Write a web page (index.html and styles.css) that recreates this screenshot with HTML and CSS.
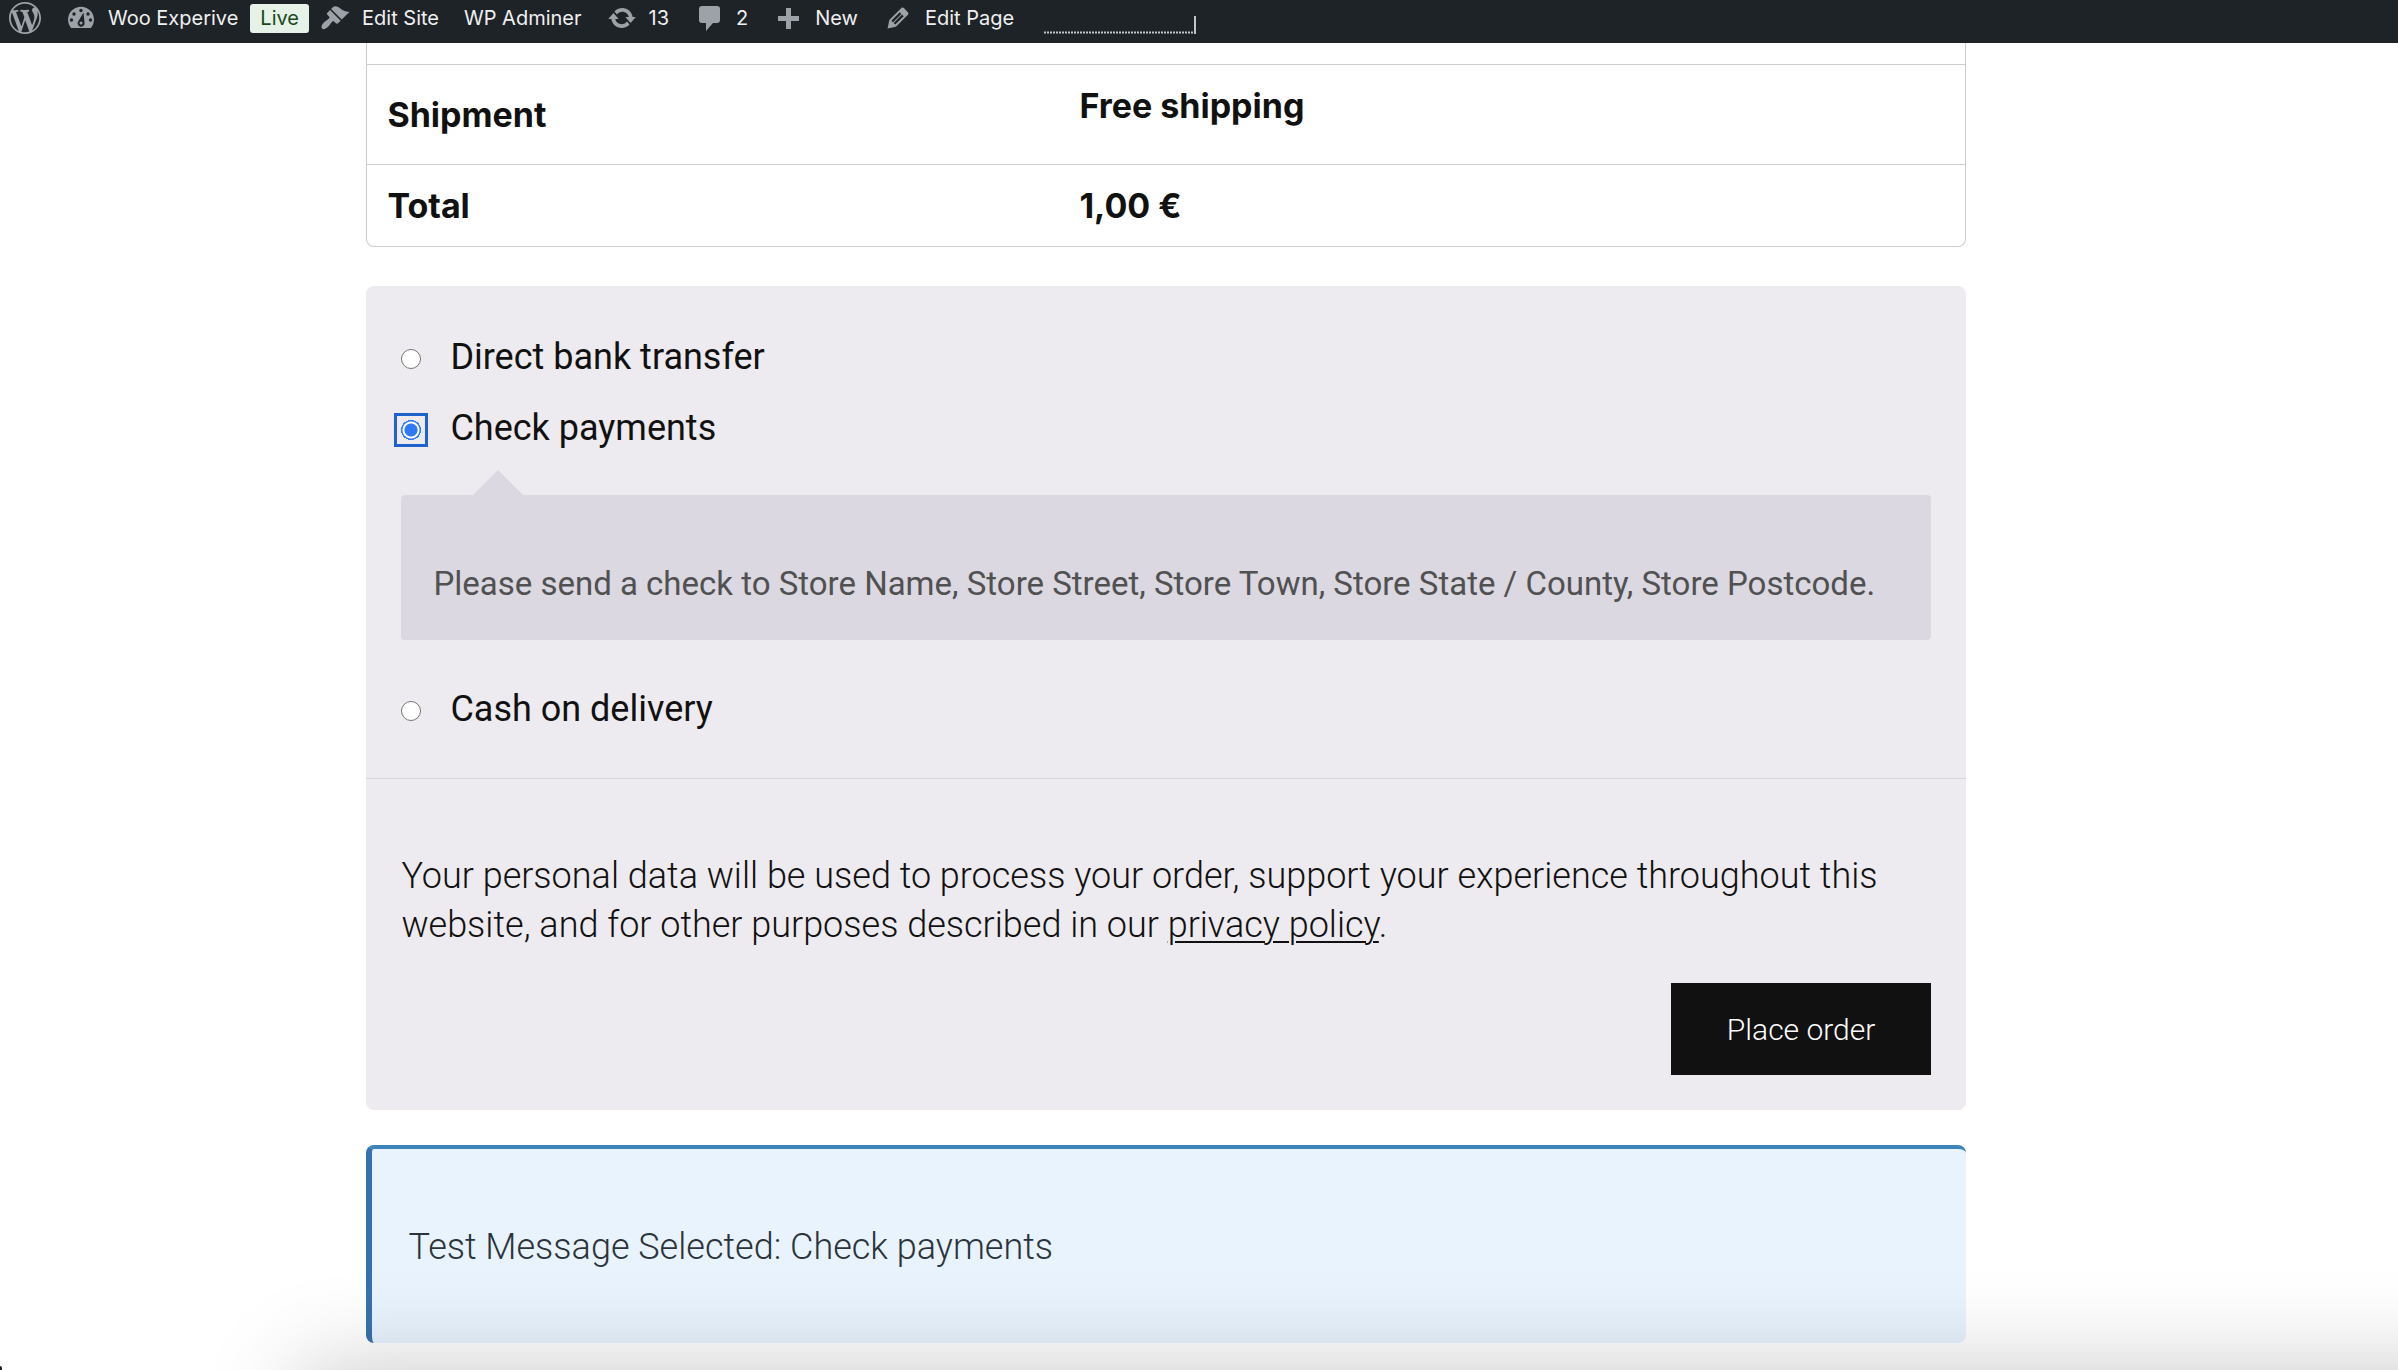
FILE: index.html
```
<!DOCTYPE html>
<html lang="en">
<head>
    <meta charset="UTF-8">
    <meta name="viewport" content="width=device-width, initial-scale=1.0">
    <title>Checkout</title>
    <link rel="stylesheet" href="styles.css">
</head>
<body>
    <nav class="adminbar">
        <a href="#" aria-label="About WordPress">
            <svg class="logo" viewBox="0 0 20 20"><path d="M20 10c0-5.51-4.49-10-10-10C4.48 0 0 4.49 0 10c0 5.52 4.48 10 10 10 5.51 0 10-4.48 10-10zM7.78 15.37L4.37 6.22c.55-.02 1.17-.08 1.17-.08.5-.06.44-1.13-.06-1.11 0 0-1.45.11-2.37.11-.18 0-.37 0-.58-.01C4.12 2.69 6.87 1.11 10 1.11c2.33 0 4.45.87 6.05 2.34-.68-.11-1.65.39-1.65 1.58 0 .74.45 1.36.9 2.1.35.61.55 1.36.55 2.46 0 1.49-1.4 5-1.4 5l-3.03-8.37c.54-.02.82-.17.82-.17.5-.05.44-1.25-.06-1.22 0 0-1.44.12-2.38.12-.87 0-2.33-.12-2.33-.12-.5-.03-.56 1.2-.06 1.22l.92.08 1.26 3.41zM17.41 10c.24-.64.74-1.87.43-4.25.7 1.29 1.05 2.71 1.05 4.25 0 3.29-1.73 6.24-4.4 7.78.97-2.59 1.94-5.2 2.92-7.78zM6.1 18.09C3.12 16.65 1.11 13.53 1.11 10c0-1.3.23-2.48.72-3.59C3.25 10.3 4.67 14.2 6.1 18.09zm4.03-6.63l2.58 6.98c-.86.29-1.76.45-2.71.45-.79 0-1.57-.11-2.29-.33.81-2.38 1.62-4.74 2.42-7.1z"/></svg>
        </a>
        <a href="#">
            <svg viewBox="0 0 30 30"><path d="M5 25a13 13 0 1 1 20 0z"/><g class="cut"><circle cx="5.500" cy="17" r="1.700"/><circle cx="8" cy="11" r="1.700"/><circle cx="15" cy="7.500" r="1.700"/><circle cx="22" cy="11" r="1.700"/><circle cx="24.500" cy="17" r="1.700"/><path d="M17.500 9.500l1 10a3.500 3.500 0 1 1-6 -1.500z"/></g><circle cx="15" cy="20" r="1.500"/></svg>
            Woo Experive
            <span class="badge">Live</span>
        </a>
        <a href="#" class="after-badge">
            <svg viewBox="0 0 20 20"><path d="M14.48 11.06L7.41 3.99l1.5-1.5c.5-.56 2.3-.47 3.51.32 1.21.8 1.43 1.28 2.91 2.1 1.18.64 2.45 1.26 4.45.85zm-.71.71L6.7 4.7 4.93 6.47c-.39.39-.39 1.02 0 1.41l1.06 1.06c.39.39.39 1.03 0 1.42-.6.6-1.43 1.11-2.21 1.69-.35.26-.7.53-1.01.84C1.43 14.23.4 16.08 1.4 17.07c.99 1 2.84-.03 4.18-1.36.31-.31.58-.66.85-1.02.57-.78 1.08-1.61 1.69-2.21.39-.39 1.02-.39 1.41 0l1.06 1.06c.39.39 1.02.39 1.41 0z"/></svg>
            Edit Site
        </a>
        <a href="#">WP Adminer</a>
        <a href="#">
            <svg viewBox="0 0 20 20"><path d="M10.2 3.28c3.53 0 6.43 2.61 6.92 6h2.08l-3.5 4-3.5-4h2.32c-.45-1.97-2.21-3.45-4.32-3.45-1.45 0-2.73.71-3.54 1.78L4.95 5.66C6.23 4.2 8.11 3.28 10.2 3.28zm-.4 13.44c-3.52 0-6.43-2.61-6.92-6H.8l3.5-4c1.17 1.33 2.33 2.67 3.5 4H5.48c.45 1.97 2.21 3.45 4.32 3.45 1.45 0 2.73-.71 3.54-1.78l1.71 1.95c-1.28 1.46-3.15 2.38-5.25 2.38z"/></svg>
            13
        </a>
        <a href="#">
            <svg viewBox="0 0 30 30"><path d="M8 3h15q3 0 3 3v11q0 3-3 3h-4l-7 8v-8H8q-3 0-3-3V6q0-3 3-3z"/></svg>
            2
        </a>
        <a href="#">
            <svg viewBox="0 0 30 30"><path d="M13 5h5v8h8v5h-8v8h-5v-8H5v-5h8z"/></svg>
            New
        </a>
        <a href="#">
            <svg viewBox="0 0 20 20"><path d="M13.89 3.39l2.71 2.72c.46.46.42 1.24.03 1.64l-8.01 8.02-5.56 1.16 1.16-5.58s7.6-7.63 7.99-8.03c.39-.39 1.22-.39 1.68.07zm-2.73 2.79l-5.59 5.61 1.11 1.11 5.54-5.65zm-2.97 8.23l5.58-5.6-1.07-1.08-5.59 5.6z"/></svg>
            Edit Page
        </a>
        <svg class="chart" viewBox="0 0 152 18"><path d="M0 16.500h150" stroke-width="2" stroke-dasharray="2 1"/><path d="M151 0v18" stroke-width="2"/></svg>
    </nav>

    <main class="checkout">
        <table class="totals">
            <tr class="cut-row"><td></td><td></td></tr>
            <tr class="shipment"><th scope="row">Shipment</th><td><p>Free shipping</p></td></tr>
            <tr><th scope="row">Total</th><td>1,00 €</td></tr>
        </table>

        <form class="payment">
            <div class="methods">
                <div class="method">
                    <input type="radio" id="bacs" name="payment_method">
                    <label for="bacs">Direct bank transfer</label>
                </div>
                <div class="method">
                    <input type="radio" id="cheque" name="payment_method" checked>
                    <label for="cheque">Check payments</label>
                </div>
                <div class="payment-box">
                    <p>Please send a check to Store Name, Store Street, Store Town, Store State / County, Store Postcode.</p>
                </div>
                <div class="method">
                    <input type="radio" id="cod" name="payment_method">
                    <label for="cod">Cash on delivery</label>
                </div>
            </div>
            <div class="place-order">
                <p>Your personal data will be used to process your order, support your experience throughout this website, and for other purposes described in our <a href="#">privacy policy</a>.</p>
                <button type="button">Place order</button>
            </div>
        </form>

        <div class="info">Test Message Selected: Check payments</div>
    </main>
    <div class="dock-shadow"></div>
    <div class="corner"></div>
</body>
</html>
```
FILE: styles.css
```
* {
    box-sizing: border-box;
}
body {
    margin: 0;
    height: 100vh;
    overflow: hidden;
    background: #fff;
    color: #111;
    font-family: Roboto, sans-serif;
    font-size: 36px;
    font-weight: 300;
    line-height: 49px;
}
p {
    margin: 0;
}

/* Admin bar */
.adminbar {
    display: flex;
    gap: 25px;
    height: 43px;
    padding: 2px 9px 9px;
    background: #1d2327;
    font-family: Inter, sans-serif;
    font-size: 20px;
    font-weight: 400;
    line-height: 32px;
}
.adminbar a {
    display: flex;
    align-items: center;
    gap: 12px;
    color: #f0f0f1;
    text-decoration: none;
    white-space: nowrap;
}
.adminbar svg {
    width: 30px;
    height: 30px;
    fill: #9ca2a7;
}
.adminbar .logo {
    width: 32px;
    height: 32px;
}
.adminbar .cut {
    fill: #1d2327;
}
.adminbar .badge {
    padding: 0 10px;
    border-radius: 3px;
    background: #e6f2e8;
    color: #184a18;
    line-height: 29px;
}
.adminbar .after-badge {
    margin-left: -14px;
}
.adminbar .chart {
    align-self: flex-end;
    width: 152px;
    height: 18px;
    margin-left: 5px;
    fill: none;
    stroke: #c3c4c7;
}

/* Order totals */
.checkout {
    width: 67%;
    max-width: 1600px;
    margin: 0 18% 0 auto;
}
.totals {
    width: 100%;
    border: 1px solid #ccc;
    border-top: 0;
    border-radius: 0 0 8px 8px;
    border-spacing: 0;
    font-family: Inter, sans-serif;
    font-size: 34px;
    font-weight: 700;
    text-align: left;
}
.totals th,
.totals td {
    padding: 16px 20px;
}
.totals th {
    width: 692px;
}
.totals tr + tr > * {
    border-top: 1px solid #ccc;
}
.totals .cut-row td {
    padding: 0;
    height: 21px;
}
.totals .shipment td {
    padding-bottom: 34px;
}

/* Payment methods */
.payment {
    margin-top: 39px;
    border-radius: 8px;
    background: #edebef;
}
.methods {
    padding: 36px 35px 33px;
    border-bottom: 1px solid #d9d7dc;
}
.method {
    display: flex;
    align-items: center;
    gap: 29px;
    height: 71px;
    font-weight: 400;
}
.method input {
    appearance: none;
    width: 20px;
    height: 20px;
    margin: 3px 0 0;
    border: 1px solid #767676;
    border-radius: 50%;
    background: #fff;
}
/* square focus ring, so the circle is painted rather than rounded */
.method input:checked {
    border: 0;
    border-radius: 0;
    background: radial-gradient(circle closest-side, #2f78f6 6px, #fff 7px, #fff 8px, #2f78f6 9px, #2f78f6 10px, transparent 10px);
    outline: 3px solid #2062cc;
    outline-offset: 4px;
}
.payment-box {
    position: relative;
    margin: 31px 0 34px;
    padding: 64px 32px 32px;
    border-radius: 4px;
    background: #dbd8e1;
    color: #515151;
    font-size: 33px;
    font-weight: 400;
}
.payment-box::before {
    content: "";
    position: absolute;
    top: -25px;
    left: 72px;
    border: 25px solid transparent;
    border-top: 0;
    border-bottom-color: #dbd8e1;
}
.place-order {
    display: flex;
    flex-direction: column;
    align-items: flex-end;
    gap: 33px;
    padding: 73px 35px 35px;
}
.place-order a {
    color: #111;
    text-decoration-thickness: 2px;
    text-underline-offset: 4px;
}
.place-order button {
    padding: 22px 56px 21px;
    border: 0;
    background: #111;
    color: #fff;
    font: inherit;
    font-size: 30px;
    cursor: pointer;
}

/* Notice */
.info {
    margin-top: 35px;
    padding: 74px 36px 71px;
    border-top: 4px solid #3d84ba;
    border-left: 6px solid #3971ae;
    border-radius: 8px;
    background: #e8f3fd;
    color: #2b333b;
}

/* Shade at the foot of the window */
.dock-shadow {
    position: fixed;
    right: -150px;
    bottom: -300px;
    left: 300px;
    height: 300px;
    box-shadow: 0 0 90px rgba(0, 0, 0, 0.22);
}
.corner {
    position: fixed;
    bottom: 0;
    left: 0;
    width: 2px;
    height: 4px;
    border-top-right-radius: 2px;
    background: #222;
}
```
